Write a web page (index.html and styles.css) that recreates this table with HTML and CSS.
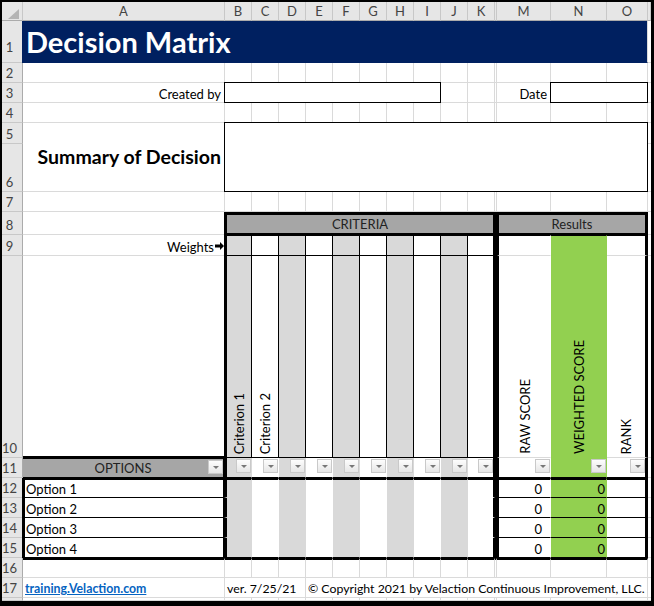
FILE: index.html
```html
<!DOCTYPE html>
<html>
<head>
<meta charset="utf-8">
<link rel="stylesheet" href="styles.css">
</head>
<body>
<div class="frame">
<div class="sheet">
  <!-- column headers -->
  <div class="corner"><i class="tri"></i></div>
  <div class="ch">A</div><div class="ch">B</div><div class="ch">C</div><div class="ch">D</div><div class="ch">E</div><div class="ch">F</div><div class="ch">G</div><div class="ch">H</div><div class="ch">I</div><div class="ch">J</div><div class="ch">K</div><div class="ch hid"></div><div class="ch">M</div><div class="ch">N</div><div class="ch">O</div><div class="ch"></div>

  <!-- row 1 -->
  <div class="rh rh1">1</div>
  <div class="c title s15">Decision Matrix</div>
  <div class="c"></div>

  <!-- row 2 -->
  <div class="rh">2</div>
  <div class="c"></div><div class="c"></div><div class="c"></div><div class="c"></div><div class="c"></div><div class="c"></div><div class="c"></div><div class="c"></div><div class="c"></div><div class="c"></div><div class="c"></div><div class="c hid"></div><div class="c"></div><div class="c"></div><div class="c"></div><div class="c"></div>

  <!-- row 3 -->
  <div class="rh">3</div>
  <div class="c right">Created by</div>
  <div class="c box s8"></div>
  <div class="c"></div><div class="c"></div><div class="c hid"></div>
  <div class="c right">Date</div>
  <div class="c box s2"></div>
  <div class="c"></div>

  <!-- row 4 -->
  <div class="rh">4</div>
  <div class="c"></div><div class="c"></div><div class="c"></div><div class="c"></div><div class="c"></div><div class="c"></div><div class="c"></div><div class="c"></div><div class="c"></div><div class="c"></div><div class="c"></div><div class="c hid"></div><div class="c"></div><div class="c"></div><div class="c"></div><div class="c"></div>

  <!-- rows 5-6 -->
  <div class="rh">5</div>
  <div class="c summary r2">Summary of Decision</div>
  <div class="c box s14 r2"></div>
  <div class="c"></div>
  <div class="rh">6</div>
  <div class="c"></div>

  <!-- row 7 -->
  <div class="rh">7</div>
  <div class="c"></div><div class="c"></div><div class="c"></div><div class="c"></div><div class="c"></div><div class="c"></div><div class="c"></div><div class="c"></div><div class="c"></div><div class="c"></div><div class="c"></div><div class="c hid"></div><div class="c"></div><div class="c"></div><div class="c"></div><div class="c"></div>

  <!-- row 8 -->
  <div class="rh">8</div>
  <div class="c"></div>
  <div class="c crit-head s10">CRITERIA</div>
  <div class="c hid blk"></div>
  <div class="c res-head s3">Results</div>
  <div class="c"></div>

  <!-- row 9 -->
  <div class="rh">9</div>
  <div class="c right weights">Weights<svg class="arr" width="9" height="8" viewBox="0 0 9 8"><path d="M0 2.5h5V0l4 4-4 4V5.5H0z" fill="#000"/></svg></div>
  <div class="c cr t1 g first"></div><div class="c cr t1"></div><div class="c cr t1 g"></div><div class="c cr t1"></div><div class="c cr t1 g"></div><div class="c cr t1"></div><div class="c cr t1 g"></div><div class="c cr t1"></div><div class="c cr t1 g"></div><div class="c cr t1 last"></div>
  <div class="c hid blk"></div>
  <div class="c rm t1"></div><div class="c rn t1"></div><div class="c ro t1"></div>
  <div class="c"></div>

  <!-- row 10 -->
  <div class="rh">10</div>
  <div class="c a10"></div>
  <div class="c cr g first vt"><span>Criterion 1</span></div><div class="c cr vt"><span>Criterion 2</span></div><div class="c cr g"></div><div class="c cr"></div><div class="c cr g"></div><div class="c cr"></div><div class="c cr g"></div><div class="c cr"></div><div class="c cr g"></div><div class="c cr last"></div>
  <div class="c hid blk"></div>
  <div class="c rm vt"><span>RAW SCORE</span></div><div class="c rn vt"><span>WEIGHTED SCORE</span></div><div class="c ro vt"><span>RANK</span></div>
  <div class="c"></div>

  <!-- row 11 -->
  <div class="rh">11</div>
  <div class="c opts"><span></span><span>OPTIONS</span><span class="dd"></span></div>
  <div class="c cf b1 g first btn"><span class="dd"></span></div><div class="c cf b1 btn"><span class="dd"></span></div><div class="c cf b1 g btn"><span class="dd"></span></div><div class="c cf b1 btn"><span class="dd"></span></div><div class="c cf b1 g btn"><span class="dd"></span></div><div class="c cf b1 btn"><span class="dd"></span></div><div class="c cf b1 g btn"><span class="dd"></span></div><div class="c cf b1 btn"><span class="dd"></span></div><div class="c cf b1 g btn"><span class="dd"></span></div><div class="c cf b1 last btn"><span class="dd"></span></div>
  <div class="c hid blk"></div>
  <div class="c rm b1 btn"><span class="dd"></span></div><div class="c rn b1 btn"><span class="dd"></span></div><div class="c ro b1 btn"><span class="dd"></span></div>
  <div class="c"></div>

  <!-- row 12 -->
  <div class="rh">12</div>
  <div class="c opt t2">Option 1</div>
  <div class="c cf t2 g first"></div><div class="c cf t2"></div><div class="c cf t2 g"></div><div class="c cf t2"></div><div class="c cf t2 g"></div><div class="c cf t2"></div><div class="c cf t2 g"></div><div class="c cf t2"></div><div class="c cf t2 g"></div><div class="c cf t2 last"></div>
  <div class="c hid blk"></div>
  <div class="c rm b1 t2 num">0</div><div class="c rn b1 t2 num">0</div><div class="c ro b1 t2"></div>
  <div class="c"></div>

  <!-- row 13 -->
  <div class="rh">13</div>
  <div class="c opt">Option 2</div>
  <div class="c cf g first"></div><div class="c cf"></div><div class="c cf g"></div><div class="c cf"></div><div class="c cf g"></div><div class="c cf"></div><div class="c cf g"></div><div class="c cf"></div><div class="c cf g"></div><div class="c cf last"></div>
  <div class="c hid blk"></div>
  <div class="c rm b1 num">0</div><div class="c rn b1 num">0</div><div class="c ro b1"></div>
  <div class="c"></div>

  <!-- row 14 -->
  <div class="rh">14</div>
  <div class="c opt">Option 3</div>
  <div class="c cf g first"></div><div class="c cf"></div><div class="c cf g"></div><div class="c cf"></div><div class="c cf g"></div><div class="c cf"></div><div class="c cf g"></div><div class="c cf"></div><div class="c cf g"></div><div class="c cf last"></div>
  <div class="c hid blk"></div>
  <div class="c rm b1 num">0</div><div class="c rn b1 num">0</div><div class="c ro b1"></div>
  <div class="c"></div>

  <!-- row 15 -->
  <div class="rh">15</div>
  <div class="c opt">Option 4</div>
  <div class="c cf b1 g first"></div><div class="c cf b1"></div><div class="c cf b1 g"></div><div class="c cf b1"></div><div class="c cf b1 g"></div><div class="c cf b1"></div><div class="c cf b1 g"></div><div class="c cf b1"></div><div class="c cf b1 g"></div><div class="c cf b1 last"></div>
  <div class="c hid blk"></div>
  <div class="c rm b1 num">0</div><div class="c rn b1 num">0</div><div class="c ro b1"></div>
  <div class="c"></div>

  <!-- row 16 -->
  <div class="rh">16</div>
  <div class="c t2"></div><div class="c t2"></div><div class="c t2"></div><div class="c t2"></div><div class="c t2"></div><div class="c t2"></div><div class="c t2"></div><div class="c t2"></div><div class="c t2"></div><div class="c t2"></div><div class="c t2"></div><div class="c hid t2"></div><div class="c t2"></div><div class="c t2"></div><div class="c t2"></div><div class="c"></div>

  <!-- row 17 -->
  <div class="rh">17</div>
  <div class="c foot"><a class="link" href="#">training.Velaction.com</a></div>
  <div class="c foot s3">ver. 7/25/21</div>
  <div class="c foot s11">© Copyright 2021 by Velaction Continuous Improvement, LLC.</div>
  <div class="c"></div>

  <!-- row 18 -->
  <div class="rh"></div>
  <div class="c"></div><div class="c"></div><div class="c"></div><div class="c"></div><div class="c"></div><div class="c"></div><div class="c"></div><div class="c"></div><div class="c"></div><div class="c"></div><div class="c"></div><div class="c hid"></div><div class="c"></div><div class="c"></div><div class="c"></div><div class="c"></div>
</div>
</div>
</body>
</html>
```

FILE: styles.css
```css
* { box-sizing: border-box; }
body { margin: 0; background: #fff; }

.frame {
  width: 654px;
  height: 606px;
  border: solid #000;
  border-width: 2px 3px 5px 2px;
  overflow: hidden;
  background: #fff;
}

.sheet {
  display: grid;
  grid-template-columns: 21px 202px repeat(10, 27px) 2px 54px 56px 41px 3px;
  grid-template-rows: 19px 42px 20px 20px 20px 21px 48px 20px 23px 21px 202px 20px 20px 20px 20px 20px 20px 20px 3px;
  font-family: Lato, "Liberation Sans", sans-serif;
  font-size: 13px;
  color: #000;
}

/* headers */
.corner {
  background: #e6e6e6;
  border-right: 1px solid #c8c8c8;
  border-bottom: 1px solid #ababab;
  display: flex;
  justify-content: flex-end;
  align-items: flex-end;
  padding: 0 3px 1px 0;
}
.tri {
  width: 0;
  height: 0;
  border-left: 11px solid transparent;
  border-bottom: 10px solid #b4b4b4;
}
.ch {
  background: #e6e6e6;
  border-right: 1px solid #c8c8c8;
  border-bottom: 1px solid #ababab;
  display: flex;
  align-items: center;
  justify-content: center;
  color: #444;
  font-size: 13px;
  line-height: 1;
}
.rh {
  background: #e6e6e6;
  border-right: 1px solid #ababab;
  border-bottom: 1px solid #c8c8c8;
  display: flex;
  align-items: flex-end;
  justify-content: center;
  padding: 0 5px 2px 0;
  color: #444;
  font-size: 13px;
  line-height: 14px;
}
.rh1 { padding-bottom: 8px; }

/* base cell */
.c {
  border-right: 1px solid #dadada;
  border-bottom: 1px solid #dadada;
  display: flex;
  align-items: flex-end;
  padding: 0 2px;
  line-height: 16px;
  white-space: nowrap;
  min-width: 0;
}
.hid { padding: 0; }
.s2 { grid-column: span 2; }
.s3 { grid-column: span 3; }
.s8 { grid-column: span 8; }
.s10 { grid-column: span 10; }
.s11 { grid-column: span 11; }
.s14 { grid-column: span 14; }
.s15 { grid-column: span 15; }
.r2 { grid-row: span 2; }
.right { justify-content: flex-end; padding-right: 3px; }

/* title */
.title {
  background: #002060;
  background-clip: padding-box;
  border-bottom-color: #002060;
  margin-left: -1px;
  color: #fff;
  font-weight: 700;
  font-size: 29px;
  line-height: 34px;
  align-items: center;
  padding-left: 4px;
}

.box {
  border: 1px solid #000;
  margin: -1px 0 0 -1px;
}

.summary {
  justify-content: flex-end;
  align-items: center;
  font-weight: 700;
  font-size: 19.5px;
  line-height: 24px;
  padding-right: 3px;
}

.weights { padding-right: 0; }
.arr { margin: 0 0 5px 1px; flex: none; }

/* criteria block */
.crit-head, .res-head {
  background: #a6a6a6;
  border-top: 3px solid #000;
  border-bottom: 2px solid #000;
  justify-content: center;
  align-items: center;
  color: #222;
}
.crit-head {
  margin-left: -1px;
  border-left: 3px solid #000;
  border-right: 2px solid #000;
}
.res-head {
  border-left: 2px solid #000;
  border-right: 3px solid #000;
}
.blk { background: #000; border-color: #000; }

.cr { border-right-color: #000; border-bottom-color: #000; }
.cf { border-right-color: transparent; border-bottom-color: transparent; }
.g { background: #d9d9d9; }
.t1 { border-top: 1px solid #000; }
.t2 { border-top: 2px solid #000; }
.b1 { border-bottom: 1px solid #000; }
.first { margin-left: -1px; border-left: 3px solid #000; }
.last { border-right: 2px solid #000; }

/* results block */
.rm { border-left: 2px solid #000; border-right-color: transparent; }
.rn { background: #92d050; border-right-color: transparent; }
.rn:not(.b1) { border-bottom-color: transparent; }
.ro { border-right: 3px solid #000; }
.num { justify-content: flex-end; padding-right: 8px; }
.rn.num { padding-right: 1px; }

.a10 { border-right-color: transparent; border-bottom: 2px solid #000; }

/* vertical headers */
.vt { justify-content: center; align-items: flex-end; padding: 0 0 3px; }
.vt span {
  writing-mode: vertical-rl;
  transform: rotate(180deg);
  line-height: 16px;
}

/* options */
.opts {
  display: grid;
  grid-template-columns: 1fr auto 1fr;
  align-items: start;
  background: #a6a6a6;
  border-top: 1px solid #000;
  border-right: 2px solid #000;
  border-bottom: 1px solid #000;
  padding: 1px 0 0;
  color: #222;
}
.opts .dd { justify-self: end; }
.opt {
  margin-left: -1px;
  border-left: 3px solid #000;
  border-right: 2px solid #000;
  border-bottom: 1px solid #000;
  padding-left: 1px;
}

/* dropdown buttons */
.btn { justify-content: flex-end; align-items: flex-start; padding: 1px 0 0; }
.dd {
  width: 15px;
  height: 14px;
  border: 1px solid #c9c9c9;
  background: linear-gradient(#fdfdfd, #e6e6e6);
  display: flex;
  align-items: center;
  justify-content: center;
}
.dd::after {
  content: "";
  border-left: 3px solid transparent;
  border-right: 3px solid transparent;
  border-top: 3px solid #777;
}

.foot { font-size: 12.3px; }
.link {
  color: #0563c1;
  font-weight: 700;
  text-decoration: underline;
}
```
